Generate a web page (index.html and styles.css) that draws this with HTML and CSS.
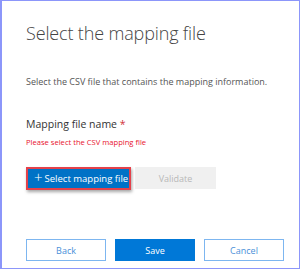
FILE: index.html
```html
<!DOCTYPE html>
<html>
<head>
    <title>Select the mapping file</title>
    <link rel="stylesheet" href="styles.css">
</head>
<body>
    <div class="frame">
        <div class="panel">
            <h1 class="title">Select the mapping file</h1>
            <p class="intro">Select the CSV file that contains the mapping information.</p>
            <div class="field">
                <label class="field-label">Mapping file name <span class="required">*</span></label>
                <div class="field-error">Please select the CSV mapping file</div>
            </div>
            <div class="file-actions">
                <button class="select-button"><span class="plus">+</span>Select mapping file</button>
                <button class="validate-button" disabled>Validate</button>
            </div>
            <div class="footer">
                <button class="footer-button">Back</button>
                <button class="footer-button primary">Save</button>
                <button class="footer-button">Cancel</button>
            </div>
        </div>
    </div>
</body>
</html>
```

FILE: styles.css
```css
/* Mapping file dialog */
body {
    margin: 0;
    font-family: 'Open Sans', 'Noto Sans', sans-serif;
    background-color: #FFFFFF;
}

.frame {
    width: 300px;
    height: 269px;
    box-sizing: border-box;
    border-top: 1px solid #8C96FA;
    border-left: 2px solid #8C96FA;
    border-right: 1px solid #8C96FA;
    border-bottom: 1px solid #8C96FA;
    background-color: #FFFFFF;
}

.panel {
    display: flex;
    flex-direction: column;
    height: 100%;
    box-sizing: border-box;
    padding: 20px 14px 7px 24px;
}

.title {
    margin: 0;
    font-size: 18px;
    font-weight: 300;
    color: #444444;
    letter-spacing: -0.15px;
}

.intro {
    margin: 30px 0 0 0;
    font-size: 9px;
    color: #555555;
}

.field {
    margin-top: 29px;
}

.field-label {
    display: block;
    font-size: 10.5px;
    color: #333333;
}

.required {
    color: #D13438;
}

.field-error {
    margin-top: 6px;
    font-size: 7.6px;
    color: #E8112D;
}

.file-actions {
    display: flex;
    gap: 4px;
    margin-top: 20px;
}

.select-button {
    display: flex;
    align-items: center;
    gap: 2px;
    width: 105px;
    height: 23px;
    padding: 0 6px;
    background-color: #0072C6;
    color: #FFFFFF;
    border: 2px solid #E4414A;
    box-shadow: 1px 2px 3px rgba(0, 0, 0, 0.35);
    font-family: 'Open Sans', 'Noto Sans', sans-serif;
    font-size: 9.5px;
    white-space: nowrap;
}

.plus {
    font-size: 15px;
    font-weight: 300;
    line-height: 1;
    margin-top: -2px;
}

.validate-button {
    width: 81px;
    height: 22px;
    background-color: #F0F0F0;
    color: #B8B8B8;
    border: none;
    font-family: 'Open Sans', 'Noto Sans', sans-serif;
    font-size: 9px;
}

.footer {
    display: flex;
    gap: 9px;
    margin-top: auto;
}

.footer-button {
    width: 80px;
    height: 22px;
    background-color: #FFFFFF;
    color: #4A90D9;
    border: 1px solid #7DB6F0;
    font-family: 'Open Sans', 'Noto Sans', sans-serif;
    font-size: 9px;
}

.footer-button.primary {
    background-color: #0078D7;
    border-color: #0078D7;
    color: #FFFFFF;
}
```
